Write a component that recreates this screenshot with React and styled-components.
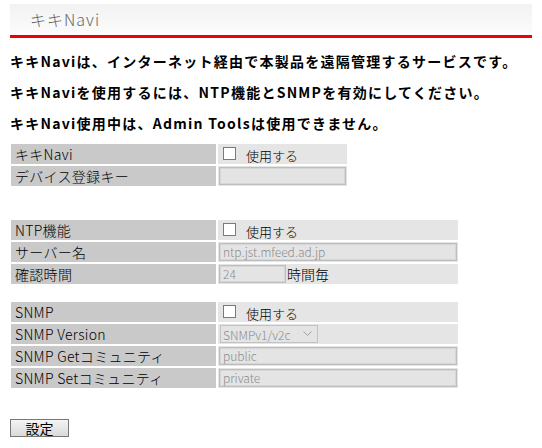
import styled, { createGlobalStyle } from "styled-components";

const Global = createGlobalStyle`
    body {
        margin: 0;
        background: #ffffff;
        font-family: "Noto Sans CJK JP", "DejaVu Sans", sans-serif;
        color: #000;
    }
`;

const Page = styled.div`
    width: 542px;
    box-sizing: border-box;
    padding: 4px 10px 0 10px;
`;

const Header = styled.div`
    width: 522px;
    height: 34px;
    box-sizing: border-box;
    padding-left: 20px;
    background: linear-gradient(#f2f2f2, #fcfcfc);
    border-bottom: 3px solid #ee0000;
    color: #666666;
    font-size: 16px;
    font-weight: 300;
    letter-spacing: 1px;
    line-height: 31px;
`;

const Intro = styled.div`
    margin-top: 8px;
`;

const Line = styled.p`
    margin: 0;
    font-size: 14px;
    font-weight: 700;
    line-height: 31px;
    letter-spacing: 1.25px;
    white-space: nowrap;
`;

const Grid = styled.div`
    display: grid;
    grid-template-columns: 205px ${(p) => p.$valueWidth}px;
    grid-auto-rows: 20px;
    gap: 2px;
    margin-left: 1px;
    margin-top: ${(p) => p.$top}px;
`;

const Label = styled.div`
    background: #c9c9c9;
    padding-left: 4px;
    font-size: 14px;
    font-weight: 300;
    letter-spacing: 0.3px;
    line-height: 20px;
    white-space: nowrap;
`;

const Value = styled.div`
    background: #e5e5e5;
    display: flex;
    align-items: center;
    padding-left: ${(p) => p.$pad || 1}px;
    font-size: 14px;
    font-weight: 300;
`;

const Check = styled.span`
    width: 11px;
    height: 11px;
    border: 1px solid #7a7a7a;
    background: #ffffff;
    margin-top: -1px;
`;

const CheckText = styled.span`
    margin-left: 10px;
    font-size: 13px;
    margin-top: 3px;
`;

const Field = styled.div`
    width: ${(p) => p.$width}px;
    height: 18px;
    box-sizing: border-box;
    border: 1px solid #bdbdbd;
    box-shadow: inset 0 0 0 1px #d6d6d6;
    background: #e4e4e4;
    color: #8c8c8c;
    font-size: 12px;
    line-height: 16px;
    padding-left: 3px;
    white-space: nowrap;
`;

const Unit = styled.span`
    margin-left: 1px;
    font-size: 14px;
`;

const SelectBox = styled.div`
    width: 98px;
    height: 18px;
    box-sizing: border-box;
    margin-left: 1px;
    border: 1px solid #c2c2c2;
    background: #e4e4e4;
    color: #8c8c8c;
    font-size: 12px;
    display: flex;
    align-items: center;
    justify-content: space-between;
    padding: 0 5px 0 2px;
`;

const Button = styled.button`
    margin-top: 31px;
    width: 59px;
    height: 18px;
    padding: 0;
    border: 1px solid #777777;
    background: linear-gradient(#f4f4f4, #dadada);
    font-family: "Noto Sans CJK JP", sans-serif;
    font-size: 14px;
    line-height: 16px;
    color: #000;
`;

function CheckRow() {
    return (
        <Value $pad={5}>
            <Check />
            <CheckText>使用する</CheckText>
        </Value>
    );
}

export default function App() {
    return (
        <Page>
            <Global />
            <Header>キキNavi</Header>
            <Intro>
                <Line>キキNaviは、インターネット経由で本製品を遠隔管理するサービスです。</Line>
                <Line>キキNaviを使用するには、NTP機能とSNMPを有効にしてください。</Line>
                <Line>キキNavi使用中は、Admin Toolsは使用できません。</Line>
            </Intro>

            <Grid $valueWidth={129} $top={5}>
                <Label>キキNavi</Label>
                <CheckRow />
                <Label>デバイス登録キー</Label>
                <Value><Field $width={127} /></Value>
            </Grid>

            <Grid $valueWidth={240} $top={34}>
                <Label>NTP機能</Label>
                <CheckRow />
                <Label>サーバー名</Label>
                <Value><Field $width={238}>ntp.jst.mfeed.ad.jp</Field></Value>
                <Label>確認時間</Label>
                <Value>
                    <Field $width={67}>24</Field>
                    <Unit>時間毎</Unit>
                </Value>
            </Grid>

            <Grid $valueWidth={240} $top={18}>
                <Label>SNMP</Label>
                <CheckRow />
                <Label>SNMP Version</Label>
                <Value>
                    <SelectBox>
                        <span>SNMPv1/v2c</span>
                        <svg width="9" height="6" viewBox="0 0 9 6">
                            <path d="M0.5 0.5 L4.5 4.5 L8.5 0.5" fill="none" stroke="#a0a0a0" strokeWidth="1" />
                        </svg>
                    </SelectBox>
                </Value>
                <Label>SNMP Getコミュニティ</Label>
                <Value><Field $width={238}>public</Field></Value>
                <Label>SNMP Setコミュニティ</Label>
                <Value><Field $width={238}>private</Field></Value>
            </Grid>

            <Button>設定</Button>
        </Page>
    );
}
